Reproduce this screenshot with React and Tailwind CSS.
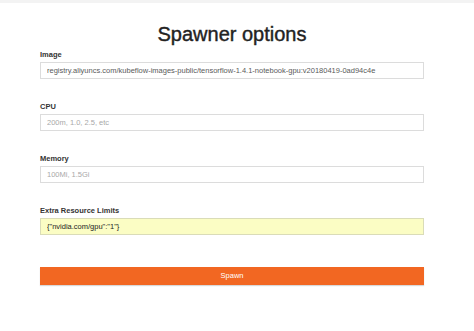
export default function App() {
  const fields = [
    { label: "Image", value: "registry.aliyuncs.com/kubeflow-images-public/tensorflow-1.4.1-notebook-gpu:v20180419-0ad94c4e", placeholder: "" },
    { label: "CPU", value: "", placeholder: "200m, 1.0, 2.5, etc" },
    { label: "Memory", value: "", placeholder: "100Mi, 1.5Gi" },
  ];
  return (
    <div className="w-[474px] h-[331px] bg-white font-['Liberation_Sans',Arial,sans-serif] overflow-hidden">
      <div className="h-[3px] bg-[#f3f3f3]" />
      <div className="ml-[40px] w-[384px] flex flex-col">
        <h1 className="mt-[21px] text-[20px] leading-[20px] text-center text-[#222] [-webkit-text-stroke:0.4px_#222]">Spawner options</h1>
        <div className="mt-[6px] flex flex-col">
          {fields.map((f, i) => (
            <div key={f.label} className={`flex flex-col ${i > 0 ? "mt-[23px]" : ""}`}>
              <label className="text-[7.5px] leading-[9px] font-bold text-[#333]">{f.label}</label>
              <input
                readOnly
                value={f.value}
                placeholder={f.placeholder}
                className="mt-[3px] h-[17px] w-full border border-[#dcdcdc] bg-white pl-[6px] text-[7.5px] text-[#5a5a5a] placeholder:text-[#a8a8a8] outline-none"
              />
            </div>
          ))}
          <div className="mt-[23px] flex flex-col">
            <label className="text-[7.5px] leading-[9px] font-bold text-[#333]">Extra Resource Limits</label>
            <input
              readOnly
              value={'{"nvidia.com/gpu":"1"}'}
              className="mt-[3px] h-[17px] w-full border border-[#dadcb8] bg-[#fbfdc4] pl-[6px] text-[7.5px] text-[#222] outline-none"
            />
          </div>
        </div>
        <button className="mt-[32px] h-[18px] w-full bg-[#f26722] text-white text-[7.5px] shadow-[0_1px_1px_rgba(0,0,0,0.15)]">
          Spawn
        </button>
      </div>
    </div>
  );
}
